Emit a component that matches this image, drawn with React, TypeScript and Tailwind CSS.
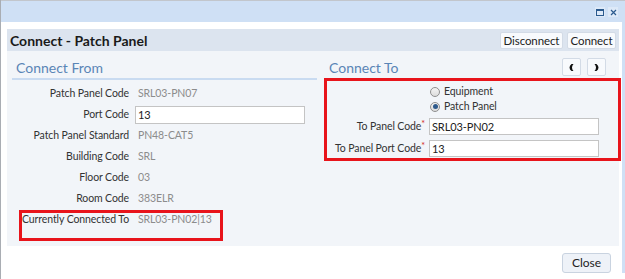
import React from 'react';

const labelCls = 'text-right text-[#333333]';
const valueCls = 'text-[#8c8c8c]';

const InfoRow = ({ label, value }: { label: string; value: string }) => (
  <div className="flex h-[21px] items-center">
    <div className={`w-[117px] ${labelCls}`}>{label}</div>
    <div className={`ml-[9px] ${valueCls}`}>{value}</div>
  </div>
);

const Radio = ({ checked, label }: { checked?: boolean; label: string }) => (
  <div className="flex h-[15px] items-center pl-[103px]">
    <span className="flex h-[10px] w-[10px] items-center justify-center rounded-full border border-[#8f8f8f] bg-gradient-to-b from-[#f4f4f4] to-[#dcdcdc]">
      {checked && <span className="h-[5px] w-[5px] rounded-full bg-[#2e5a8c]" />}
    </span>
    <span className="ml-[4px] text-[#333333]">{label}</span>
  </div>
);

const ToField = ({ label, value }: { label: string; value: string }) => (
  <div className="flex items-center">
    <div className={`w-[98px] ${labelCls}`}>
      {label}
      <span className="relative -top-[3px] text-[9px] text-[#d01c1c]">*</span>
    </div>
    <input
      readOnly
      value={value}
      className="ml-[4px] h-[17px] w-[170px] border border-[#c4c4c4] bg-white px-[2px] text-[11px] text-[#222222] outline-none"
    />
  </div>
);

const SmallButton = ({ children, className = '' }: { children: React.ReactNode; className?: string }) => (
  <button
    className={`flex h-[17px] items-center justify-center rounded-[2px] border border-[#d3dbe6] bg-[#f8fafd] text-[11.5px] leading-[15px] text-[#222222] ${className}`}
  >
    {children}
  </button>
);

const Bracket = ({ flip }: { flip?: boolean }) => (
  <svg width="5" height="7" viewBox="0 0 5 7" className={flip ? '-scale-x-100' : ''}>
    <path d="M4.5 0 L2.5 0 Q0.5 1.5 0.5 3.5 Q0.5 5.5 2.5 7 L4.5 7 Q3 5.5 3 3.5 Q3 1.5 4.5 0 Z" fill="#111111" />
  </svg>
);

export default function App() {
  return (
    <div className="relative h-[279px] w-[625px] overflow-hidden border-l border-l-[#a9adb3] bg-white font-['Lato','Liberation_Sans',sans-serif] text-[10.5px] tracking-[-0.1px]">
      {/* window title bar */}
      <div className="flex h-[22px] items-start justify-end border-t border-t-[#c2c6cc] bg-[#cfe0f5] pr-[7px] pt-[6px]">
        <div className="flex gap-[3px]">
          <span className="flex h-[10px] w-[10px] items-center justify-center bg-[#dde9f8]">
            <svg width="8" height="7" viewBox="0 0 8 7">
              <rect x="0.5" y="0.5" width="7" height="6" fill="none" stroke="#2b5a8e" />
              <line x1="0.5" y1="1.5" x2="7.5" y2="1.5" stroke="#2b5a8e" />
            </svg>
          </span>
          <span className="flex h-[10px] w-[10px] items-center justify-center bg-[#dde9f8]">
            <svg width="7" height="7" viewBox="0 0 7 7">
              <path d="M1 1 L6 6 M6 1 L1 6" stroke="#2b5a8e" strokeWidth="1.2" />
            </svg>
          </span>
        </div>
      </div>

      <div className="border-r-[3px] border-r-[#cfe0f5] bg-white pt-[7px]">
        {/* panel header */}
        <div className="mx-[6px] mr-[3px] flex h-[22px] items-center justify-between bg-[#dce4ef] pl-[3px] pr-[3px]">
          <span className="text-[14px] font-bold tracking-normal text-[#1a1a1a]">Connect - Patch Panel</span>
          <div className="flex gap-[4px]">
            <SmallButton className="w-[63px]">Disconnect</SmallButton>
            <SmallButton className="w-[49px]">Connect</SmallButton>
          </div>
        </div>

        {/* panel body */}
        <div className="ml-[6px] mr-[3px] flex h-[195px] bg-[#f2f5f9]">
          {/* Connect From */}
          <div className="w-[310px] pl-[5px]">
            <div className="h-[29px] border-b-2 border-b-[#c9dbf1] pl-[4px] pt-[9px] text-[14px] leading-[16px] tracking-normal text-[#5a85b6]">
              Connect From
            </div>
            <div className="pt-[3px]">
              <InfoRow label="Patch Panel Code" value="SRL03-PN07" />
              <div className="flex h-[21px] items-center">
                <div className={`w-[117px] ${labelCls}`}>Port Code</div>
                <input
                  readOnly
                  value="13"
                  className="ml-[6px] h-[18px] w-[170px] border border-[#c4c4c4] bg-white px-[2px] text-[11px] text-[#222222] outline-none"
                />
              </div>
              <InfoRow label="Patch Panel Standard" value="PN48-CAT5" />
              <InfoRow label="Building Code" value="SRL" />
              <InfoRow label="Floor Code" value="03" />
              <InfoRow label="Room Code" value="383ELR" />
              <div className="relative">
                <InfoRow label="Currently Connected To" value="SRL03-PN02|13" />
                <div className="absolute left-[7px] top-[1px] h-[31px] w-[204px] border-[3px] border-[#e8141b]" />
              </div>
            </div>
          </div>

          {/* Connect To */}
          <div className="flex-1 pl-[7px]">
            <div className="flex h-[27px] items-start justify-between pl-[5px] pr-[13px]">
              <span className="pt-[9px] text-[14px] leading-[16px] tracking-normal text-[#5a85b6]">Connect To</span>
              <div className="flex gap-[6px] pt-[7px]">
                <SmallButton className="h-[18px] w-[19px]">
                  <Bracket />
                </SmallButton>
                <SmallButton className="h-[18px] w-[19px]">
                  <Bracket flip />
                </SmallButton>
              </div>
            </div>
            <div className="-mr-[2px] border-[3px] border-[#e8141b] pb-[1px] pt-[3px]">
              <Radio label="Equipment" />
              <Radio checked label="Patch Panel" />
              <div className="mt-[4px]">
                <ToField label="To Panel Code" value="SRL03-PN02" />
              </div>
              <div className="mt-[5px]">
                <ToField label="To Panel Port Code" value="13" />
              </div>
            </div>
          </div>
        </div>

        {/* footer */}
        <div className="flex justify-end pr-[11px] pt-[7px]">
          <button className="h-[20px] w-[49px] rounded-[3px] border border-[#c9d3e0] bg-[#eef2f8] text-[12px] tracking-normal text-[#222222]">
            Close
          </button>
        </div>
      </div>
    </div>
  );
}
